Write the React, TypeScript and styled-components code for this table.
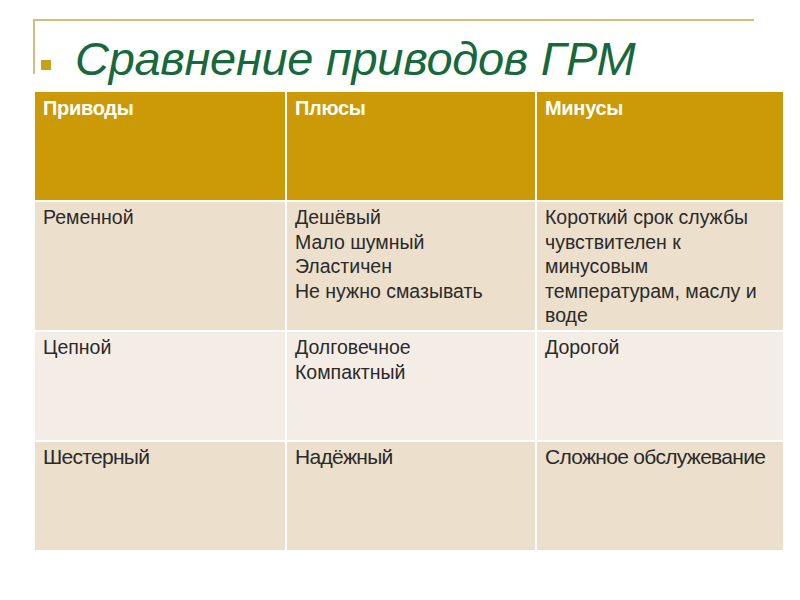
import React from "react";
import styled, { createGlobalStyle } from "styled-components";

const GlobalStyle = createGlobalStyle`
    html, body {
        margin: 0;
        padding: 0;
        background: #ffffff;
    }
    body {
        width: 800px;
        height: 600px;
        overflow: hidden;
        font-family: "Liberation Sans", Arial, sans-serif;
    }
`;

const Slide = styled.div`
    width: 800px;
    height: 600px;
    box-sizing: border-box;
    padding: 19px 0 0 33px;
`;

const TitleFrame = styled.div`
    width: 719px;
    height: 53px;
    border-top: 2px solid #d6bb7e;
    border-left: 2px solid #d6bb7e;
`;

const TitleRow = styled.div`
    display: flex;
    align-items: flex-end;
    gap: 24px;
    padding: 14px 0 0 6px;
`;

const Bullet = styled.span`
    width: 10px;
    height: 10px;
    background: #c9a01c;
    flex: none;
    margin-bottom: 13px;
`;

const Title = styled.h1`
    margin: 0;
    font-family: "Liberation Sans", Arial, sans-serif;
    font-style: italic;
    font-weight: normal;
    font-size: 47px;
    line-height: 48px;
    color: #17683b;
    letter-spacing: -0.3px;
    white-space: nowrap;
`;

const Table = styled.div`
    display: grid;
    grid-template-columns: 250px 248px 246px;
    grid-template-rows: 108px 128px 108px 108px;
    gap: 2px;
    margin: 18px 0 0 2px;
    width: 748px;
    background: #ffffff;
`;

const HeadCell = styled.div`
    background: #cc9a06;
    color: #ffffff;
    font-weight: bold;
    font-size: 20px;
    letter-spacing: -0.3px;
    line-height: 23px;
    padding: 5px 8px;
`;

const Cell = styled.div<{ $shade: "dark" | "light"; $narrow?: boolean }>`
    background: ${(p) => (p.$shade === "dark" ? "#ecdfcc" : "#f4ede6")};
    color: #2a2a2a;
    font-size: ${(p) => (p.$narrow ? "21px" : "19.5px")};
    letter-spacing: ${(p) => (p.$narrow ? "-0.7px" : "0")};
    line-height: 24.5px;
    padding: 3px 8px;
`;

const Line = styled.div`
    white-space: nowrap;
`;

type Row = { shade: "dark" | "light"; narrow?: boolean; cells: string[][] };

const rows: Row[] = [
    {
        shade: "dark",
        cells: [
            ["Ременной"],
            ["Дешёвый", "Мало шумный", "Эластичен", "Не нужно смазывать"],
            ["Короткий срок службы", "чувствителен к", "минусовым", "температурам, маслу и", "воде"],
        ],
    },
    {
        shade: "light",
        cells: [["Цепной"], ["Долговечное", "Компактный"], ["Дорогой"]],
    },
    {
        shade: "dark",
        narrow: true,
        cells: [["Шестерный"], ["Надёжный"], ["Сложное обслужевание"]],
    },
];

const App = () => {
    return (
        <>
            <GlobalStyle />
            <Slide>
                <TitleFrame>
                    <TitleRow>
                        <Bullet />
                        <Title>Сравнение приводов ГРМ</Title>
                    </TitleRow>
                </TitleFrame>
                <Table>
                    <HeadCell>Приводы</HeadCell>
                    <HeadCell>Плюсы</HeadCell>
                    <HeadCell>Минусы</HeadCell>
                    {rows.map((row, i) =>
                        row.cells.map((lines, j) => (
                            <Cell key={`${i}-${j}`} $shade={row.shade} $narrow={row.narrow}>
                                {lines.map((l) => (
                                    <Line key={l}>{l}</Line>
                                ))}
                            </Cell>
                        ))
                    )}
                </Table>
            </Slide>
        </>
    );
};

export default App;
